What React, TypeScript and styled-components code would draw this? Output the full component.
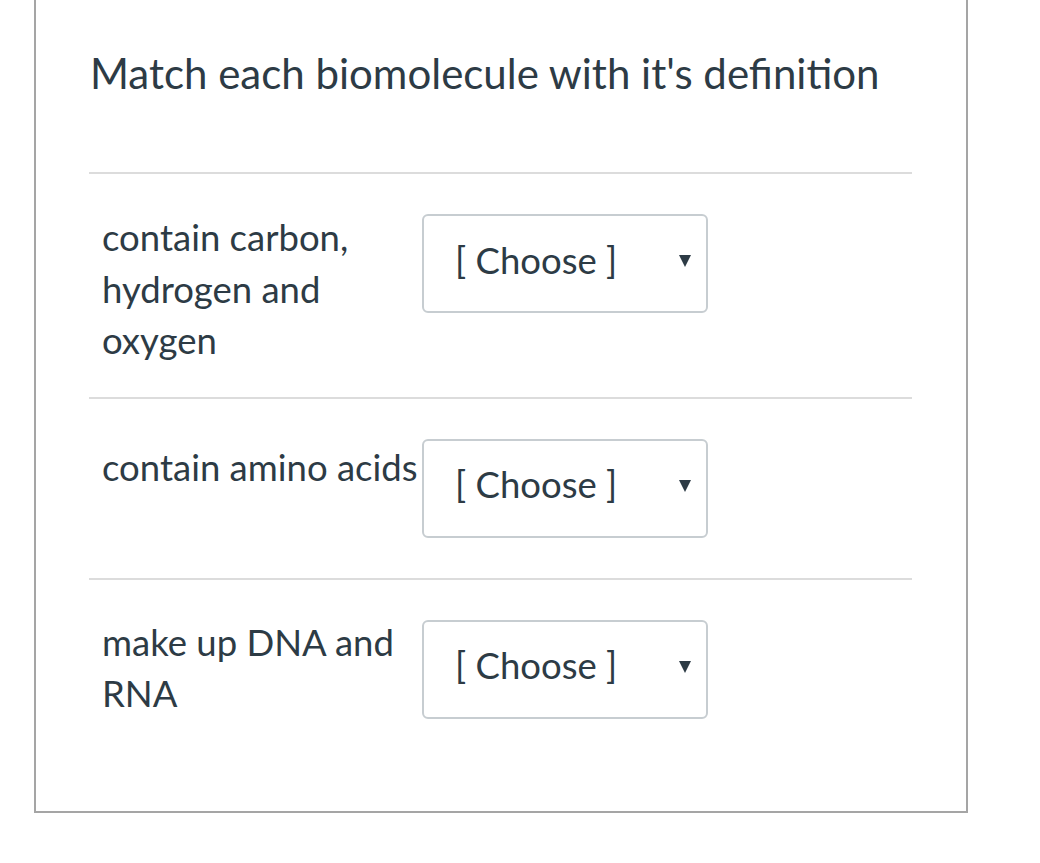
import React from 'react';
import styled, { createGlobalStyle } from 'styled-components';

const GlobalStyle = createGlobalStyle`
  html, body {
    margin: 0;
    padding: 0;
    background: #ffffff;
  }
  body {
    font-family: Lato, "Noto Sans", sans-serif;
    color: #2d3b45;
  }
`;

const Page = styled.div`
  padding-left: 34px;
  width: 934px;
`;

const Card = styled.div`
  border: 2px solid #a5a5a5;
  border-top: none;
  padding: 0 54px 52px 53px;
`;

const Title = styled.h1`
  margin: 0;
  padding: 46px 0 0 1px;
  height: 172px;
  box-sizing: border-box;
  font-size: 42px;
  font-weight: 400;
  line-height: 54px;
  color: #2d3b45;
`;

const Row = styled.div`
  display: flex;
  align-items: flex-start;
  border-top: 2px solid #dcdcdc;
  padding: 40px 0 40px 13px;
`;

const Label = styled.div<{ $shift: number }>`
  width: 320px;
  flex-shrink: 0;
  font-size: 36.5px;
  line-height: 51.5px;
  margin-top: ${({ $shift }) => -2 + $shift}px;
  margin-bottom: -10px;
`;

const SelectBox = styled.div`
  display: flex;
  align-items: center;
  justify-content: space-between;
  box-sizing: border-box;
  width: 286px;
  height: 99px;
  border: 2px solid #c7cdd1;
  border-radius: 6px;
  padding: 0 15px 8px 31px;
  font-size: 36.5px;
  color: #2d3b45;
  background: #ffffff;
`;

const Arrow = styled.svg`
  width: 12px;
  height: 13px;
  margin-top: 2px;
`;

type Item = { label: string; shift: number };

const items: Item[] = [
  { label: 'contain carbon, hydrogen and oxygen', shift: 0 },
  { label: 'contain amino acids', shift: 5 },
  { label: 'make up DNA and RNA', shift: -1 },
];

const Choose = (): JSX.Element => (
  <SelectBox>
    <span>[ Choose ]</span>
    <Arrow viewBox="0 0 12 13">
      <polygon points="0,1 12,1 6,13" fill="#2d3b45" />
    </Arrow>
  </SelectBox>
);

const App = (): JSX.Element => (
  <>
    <GlobalStyle />
    <Page>
      <Card>
        <Title>Match each biomolecule with it's definition</Title>
        {items.map((item) => (
          <Row key={item.label}>
            <Label $shift={item.shift}>{item.label}</Label>
            <Choose />
          </Row>
        ))}
      </Card>
    </Page>
  </>
);

export default App;
